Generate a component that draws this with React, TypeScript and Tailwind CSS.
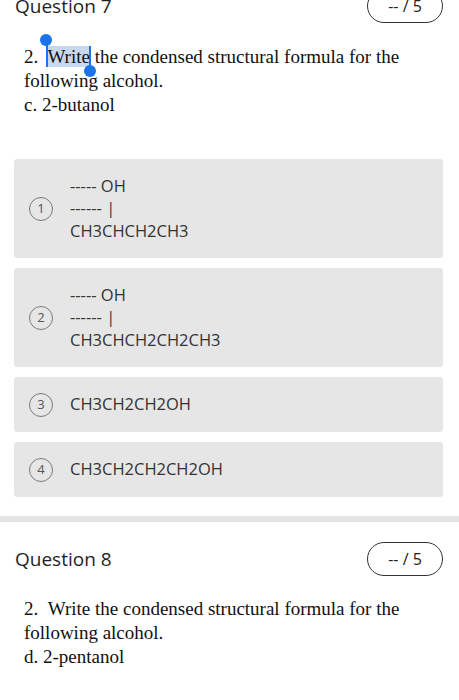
import React from 'react';

type Option = { n: number; lines: string[] };

const options: Option[] = [
  { n: 1, lines: ['----- OH', '------ |', 'CH3CHCH2CH3'] },
  { n: 2, lines: ['----- OH', '------ |', 'CH3CHCH2CH2CH3'] },
  { n: 3, lines: ['CH3CH2CH2OH'] },
  { n: 4, lines: ['CH3CH2CH2CH2OH'] },
];

const sans = { fontFamily: '"Open Sans", "Noto Sans", sans-serif' };
const serif = { fontFamily: '"Liberation Serif", "Times New Roman", serif' };

const Header: React.FC<{ title: string; className?: string }> = ({ title, className = '' }) => (
  <div className={`flex items-center justify-between h-[34px] pl-[15px] pr-[16px] ${className}`}>
    <h2 className="text-[19px] text-[#1f1f1f]" style={sans}>{title}</h2>
    <div
      className="w-[76px] h-[34px] rounded-full border border-[#333] flex items-center justify-center text-[16px] text-[#222]"
      style={sans}
    >
      -- / 5
    </div>
  </div>
);

const App: React.FC = () => {
  return (
    <div className="w-[459px] h-[700px] overflow-hidden bg-white">
      {/* Question 7 */}
      <Header title="Question 7" className="-mt-[11px]" />

      <div className="mt-[22px] pl-[24px] pr-4 text-[19px] leading-[24px] text-[#111]" style={serif}>
        <p>
          2.&nbsp;{' '}
          <span className="relative bg-[#c8d8ee]">
            Write
            {/* selection handles */}
            <span className="absolute left-[-1px] top-[-6px] bottom-0 w-[2px] bg-[#1a73e8]" />
            <span className="absolute left-[-7px] top-[-12px] w-[12px] h-[12px] rounded-full bg-[#1a73e8]" />
            <span className="absolute right-[-1px] top-0 bottom-[-4px] w-[2px] bg-[#1a73e8]" />
            <span className="absolute right-[-6px] bottom-[-10px] w-[12px] h-[12px] rounded-full bg-[#1a73e8]" />
          </span>{' '}
          the condensed structural formula for the following alcohol.
        </p>
        <p>c. 2-butanol</p>
      </div>

      <div className="mt-[42px] pl-[14px] pr-[16px] flex flex-col gap-[10px]" style={sans}>
        {options.map((o) => (
          <div
            key={o.n}
            className={`bg-[#e6e6e6] rounded-[3px] flex items-center gap-[17px] pl-[15px] ${o.lines.length > 1 ? 'h-[99px]' : 'h-[55px]'}`}
          >
            <div className="w-[24px] h-[24px] shrink-0 rounded-full border-[1.5px] border-[#7a7a7a] flex items-center justify-center text-[13px] text-[#555]">
              {o.n}
            </div>
            <div className="text-[16.5px] leading-[22.5px] text-[#333]">
              {o.lines.map((l, i) => (
                <div key={i}>{l}</div>
              ))}
            </div>
          </div>
        ))}
      </div>

      {/* divider */}
      <div className="mt-[19px] h-[6px] bg-[#e4e4e4]" />

      {/* Question 8 */}
      <Header title="Question 8" className="mt-[20px]" />

      <div className="mt-[21px] pl-[24px] pr-4 text-[19px] leading-[24px] text-[#111]" style={serif}>
        <p>2.&nbsp;&nbsp;Write the condensed structural formula for the following alcohol.</p>
        <p>d. 2-pentanol</p>
      </div>
    </div>
  );
};

export default App;
